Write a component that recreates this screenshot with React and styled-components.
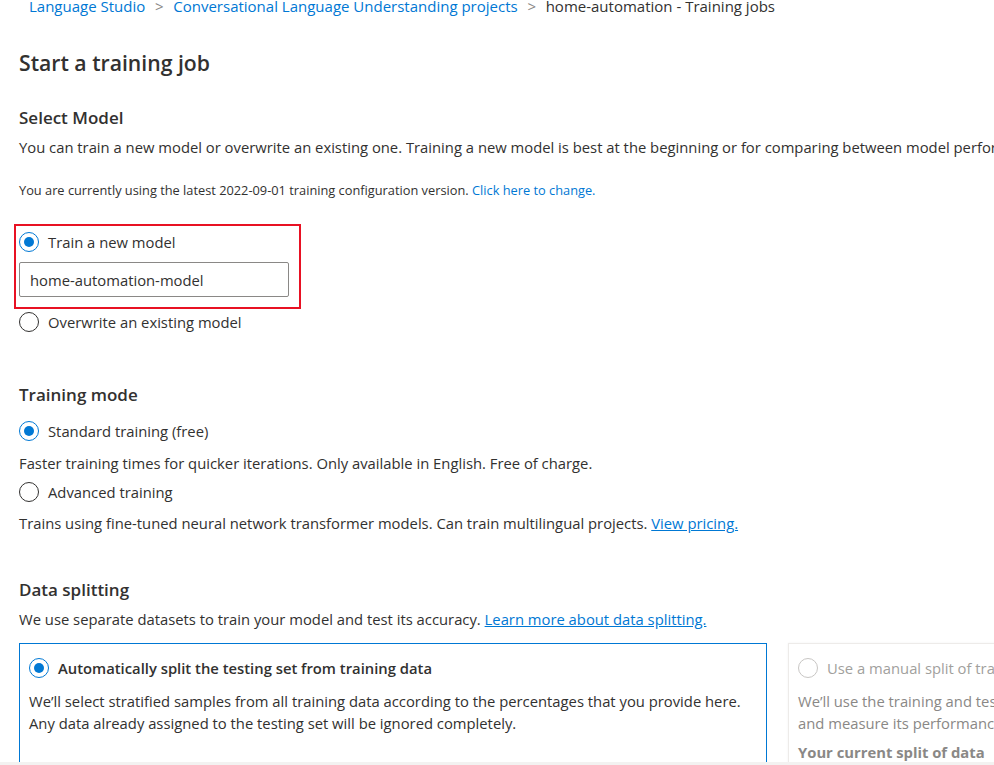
import React from "react";
import styled, { createGlobalStyle } from "styled-components";

const GlobalStyle = createGlobalStyle`
  html, body {
    margin: 0;
    padding: 0;
    background: #ffffff;
  }
  body {
    font-family: "Open Sans", "Noto Sans", "Liberation Sans", sans-serif;
    color: #323130;
  }
`;

const Page = styled.div`
  width: 994px;
  height: 765px;
  overflow: hidden;
  box-sizing: border-box;
  border-bottom: 3px solid #f3f2f1;
`;

const Breadcrumb = styled.nav`
  display: flex;
  align-items: center;
  height: 20px;
  margin-top: -4px;
  padding-left: 29px;
  font-size: 15px;
  white-space: nowrap;
`;

const Crumb = styled.span`
  color: ${p => (p.$current ? "#323130" : "#0078d4")};
`;

const Chevron = styled.span`
  display: inline-flex;
  width: 28px;
  justify-content: center;
  color: #8a8886;
`;

const Content = styled.main`
  padding-left: 19px;
  white-space: nowrap;
`;

const Title = styled.h1`
  margin: 33px 0 0;
  font-size: 21.2px;
  font-weight: 600;
  line-height: 28px;
`;

const SectionTitle = styled.h2`
  margin: ${p => p.$top || 26}px 0 0;
  font-size: 17px;
  font-weight: 600;
  line-height: 22px;
`;

const Text = styled.p`
  margin: ${p => p.$top || 0}px 0 0;
  font-size: ${p => (p.$small ? 12.8 : 14.8)}px;
  line-height: 20px;
  color: #323130;
`;

const Link = styled.a`
  color: #0078d4;
  text-decoration: ${p => (p.$underline ? "underline" : "none")};
  cursor: pointer;
`;

const Highlight = styled.div`
  margin: 24px 0 0 -5px;
  width: 270px;
  border: 2px solid #e81123;
  padding: 6px 10px 10px 3px;
`;

const RadioRow = styled.label`
  display: flex;
  align-items: center;
  gap: 9px;
  height: 20px;
  margin-top: ${p => p.$top || 0}px;
  font-size: 14.8px;
  font-weight: ${p => (p.$bold ? 600 : 400)};
  color: ${p => (p.$disabled ? "#a19f9d" : "#323130")};
`;

const Circle = styled.span`
  box-sizing: border-box;
  width: 20px;
  height: 20px;
  border-radius: 50%;
  border: 1px solid
    ${p => (p.$disabled ? "#c8c6c4" : p.$checked ? "#0078d4" : "#323130")};
  display: flex;
  align-items: center;
  justify-content: center;
  flex: none;

  &::after {
    content: "";
    display: ${p => (p.$checked ? "block" : "none")};
    width: 10px;
    height: 10px;
    border-radius: 50%;
    background: #0078d4;
  }
`;

const Input = styled.div`
  box-sizing: border-box;
  margin-top: 10px;
  width: 270px;
  height: 35px;
  border: 1px solid #8a8886;
  border-radius: 2px;
  padding: 0 10px;
  display: flex;
  align-items: center;
  font-size: 14.8px;
  color: #323130;
`;

const Cards = styled.div`
  display: flex;
  gap: 21px;
  margin-top: 14px;
`;

const Card = styled.div`
  box-sizing: border-box;
  flex: none;
  width: ${p => p.$width}px;
  height: 130px;
  padding: 14px 9px 0;
  border: 1px solid ${p => (p.$selected ? "#0078d4" : "#edebe9")};
  box-shadow: ${p => (p.$selected ? "none" : "0 0 2px rgba(0,0,0,0.06)")};
`;

const CardText = styled.p`
  margin: 12px 0 0;
  font-size: 14.8px;
  line-height: 22px;
  color: ${p => (p.$muted ? "#8a8886" : "#323130")};
`;

const CardSubhead = styled.div`
  margin-top: 8px;
  font-size: 14.8px;
  font-weight: 700;
  color: #8a8886;
`;

function Radio({ checked, disabled, bold, top, children }) {
  return (
    <RadioRow $bold={bold} $disabled={disabled} $top={top}>
      <Circle $checked={checked} $disabled={disabled} />
      {children}
    </RadioRow>
  );
}

export default function App() {
  return (
    <Page>
      <GlobalStyle />
      <Breadcrumb>
        <Crumb>Language Studio</Crumb>
        <Chevron>&gt;</Chevron>
        <Crumb>Conversational Language Understanding projects</Crumb>
        <Chevron>&gt;</Chevron>
        <Crumb $current>home-automation - Training jobs</Crumb>
      </Breadcrumb>

      <Content>
        <Title>Start a training job</Title>

        <SectionTitle $top={30}>Select Model</SectionTitle>
        <Text $top={8}>
          You can train a new model or overwrite an existing one. Training a new
          model is best at the beginning or for comparing between model
          performance.
        </Text>
        <Text $small $top={23}>
          You are currently using the latest 2022-09-01 training configuration
          version. <Link>Click here to change.</Link>
        </Text>

        <Highlight>
          <Radio checked>Train a new model</Radio>
          <Input>home-automation-model</Input>
        </Highlight>
        <Radio top={3}>Overwrite an existing model</Radio>

        <SectionTitle $top={52}>Training mode</SectionTitle>
        <Radio checked top={15}>Standard training (free)</Radio>
        <Text $top={12}>
          Faster training times for quicker iterations. Only available in
          English. Free of charge.
        </Text>
        <Radio top={9}>Advanced training</Radio>
        <Text $top={11}>
          Trains using fine-tuned neural network transformer models. Can train
          multilingual projects. <Link $underline>View pricing.</Link>
        </Text>

        <SectionTitle $top={46}>Data splitting</SectionTitle>
        <Text $top={8}>
          We use separate datasets to train your model and test its accuracy.{" "}
          <Link $underline>Learn more about data splitting.</Link>
        </Text>

        <Cards>
          <Card $selected $width={748}>
            <Radio checked bold>
              Automatically split the testing set from training data
            </Radio>
            <CardText>
              We’ll select stratified samples from all training data according
              to the percentages that you provide here.
              <br />
              Any data already assigned to the testing set will be ignored
              completely.
            </CardText>
          </Card>
          <Card $width={400}>
            <Radio disabled>Use a manual split of training and testing data</Radio>
            <CardText $muted>
              We’ll use the training and testing sets you have defined to train
              <br />
              and measure its performance.
            </CardText>
            <CardSubhead>Your current split of data</CardSubhead>
          </Card>
        </Cards>
      </Content>
    </Page>
  );
}
